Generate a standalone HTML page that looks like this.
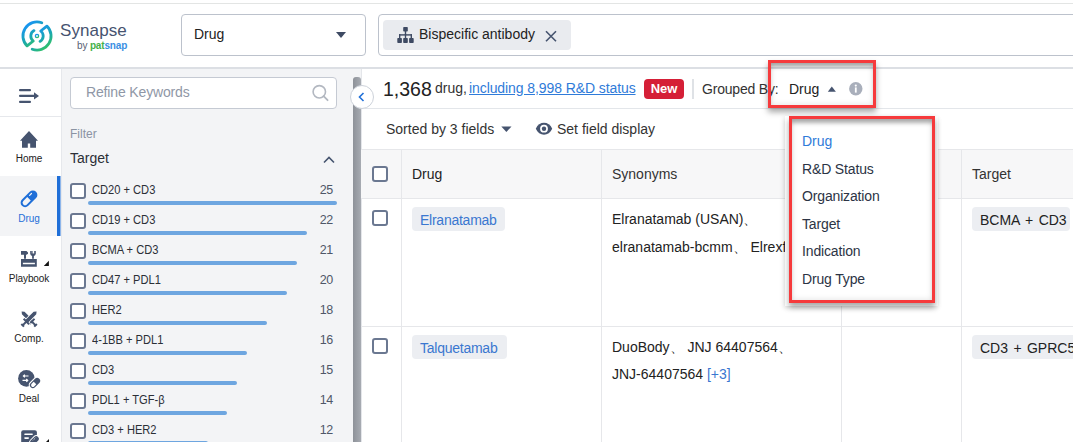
<!DOCTYPE html>
<html><head><meta charset="utf-8">
<style>
*{box-sizing:border-box;margin:0;padding:0}
html,body{width:1073px;height:442px;overflow:hidden;background:#fff;font-family:"Liberation Sans",sans-serif;color:#222}
.a{position:absolute;white-space:nowrap}
#topline{left:0;top:3px;width:1073px;height:1px;background:#e3e5e4}
#hdrline{left:0;top:67px;width:1073px;height:2px;background:#dcdfe4}
#sel{left:181px;top:14px;width:185px;height:42px;border:1px solid #bcc2cc;border-radius:4px}
#srch{left:378px;top:14px;width:720px;height:42px;border:1px solid #bcc2cc;border-radius:4px}
#nav{left:0;top:69px;width:62px;height:373px;background:#fff;border-right:1px solid #e6e8ec}
#panel{left:62px;top:69px;width:300px;height:373px;background:#f3f4f6;border-right:1px solid #e4e6ea}
#scroll{left:353px;top:77px;width:8px;height:365px;background:linear-gradient(90deg,#8e9299,#a7abb2);border-radius:3px 3px 0 0}
#main{left:362px;top:69px;width:711px;height:373px;background:#fff}
.cb{position:absolute;width:16px;height:16px;border:2px solid #6b7891;border-radius:3px;background:#fff}
.bar{position:absolute;height:4px;background:#6ea6e0;border-radius:2px}
.fl{position:absolute;font-size:13px;transform:scaleX(0.855);transform-origin:0 0;color:#2b2f36}
.fn{position:absolute;font-size:12.5px;letter-spacing:-0.3px;color:#4f5768;text-align:right;margin:-1px 0 0 -1px}
</style></head><body>
<div class="a" id="topline"></div>
<!-- logo -->
<svg class="a" style="left:19.5px;top:19px" width="34" height="34" viewBox="-17 -17 34 34">
<defs><linearGradient id="lg" x1="0.2" y1="0" x2="0.8" y2="1"><stop offset="0" stop-color="#1790ff"/><stop offset="0.55" stop-color="#1aa8b0"/><stop offset="1" stop-color="#36c65a"/></linearGradient></defs>
<g fill="none" stroke="url(#lg)" stroke-width="2.8" stroke-linecap="round" stroke-linejoin="round">
<path d="M4.8,-13.2 A14,14 0 0 0 -9.9,9.9 L-3.7,5 A6.2,6.2 0 0 1 -3,-5.4"/>
<path d="M-4.8,13.2 A14,14 0 0 0 9.9,-9.9 L3.7,-5 A6.2,6.2 0 0 1 3,5.4"/>
<circle cx="0" cy="0" r="1.6" stroke-width="1.4"/>
</g></svg>
<div class="a" style="left:60px;top:21px;font-size:17px;color:#46536f;letter-spacing:0.1px">Synapse</div>
<div class="a" style="left:77px;top:40px;font-size:10px;letter-spacing:-0.15px;color:#5a6172">by <span style="color:#44b04a;font-weight:bold">pat</span><span style="color:#3b8fe3;font-weight:bold">snap</span></div>
<!-- selects -->
<div class="a" id="sel"></div>
<div class="a" style="left:194px;top:26px;font-size:14px;color:#222">Drug</div>
<svg class="a" style="left:336px;top:32px" width="10" height="6"><path d="M0,0H10L5,6Z" fill="#3e4a63"/></svg>
<div class="a" id="srch"></div>
<div class="a" style="left:383px;top:20px;width:188px;height:30px;background:#e9ebef;border-radius:4px"></div>
<svg class="a" style="left:397px;top:27px" width="17" height="16" viewBox="0 0 17 16"><g fill="#3e4a63"><rect x="6.2" y="0" width="4.6" height="4.6" rx="0.8"/><rect x="7.8" y="4" width="1.4" height="4"/><rect x="2" y="7.2" width="13" height="1.4"/><rect x="2" y="7.2" width="1.4" height="4"/><rect x="13.6" y="7.2" width="1.4" height="4"/><rect x="7.8" y="7.2" width="1.4" height="4"/><rect x="0.3" y="11" width="4.6" height="5" rx="0.8"/><rect x="6.2" y="11" width="4.6" height="5" rx="0.8"/><rect x="12.1" y="11" width="4.6" height="5" rx="0.8"/></g></svg>
<div class="a" style="left:419px;top:26px;font-size:14px;color:#222">Bispecific antibody</div>
<svg class="a" style="left:545px;top:30px" width="12" height="12"><path d="M1,1.3L11,11.3M11,1.3L1,11.3" stroke="#46546f" stroke-width="1.6"/></svg>
<div class="a" id="hdrline"></div>

<!-- nav -->
<div class="a" id="nav"></div>
<div class="a" id="panel"></div>
<div class="a" id="scroll"></div>
<div class="a" id="main"></div>

<!-- panel -->
<div class="a" style="left:70px;top:77px;width:267px;height:32px;background:#fff;border:1px solid #c5cad3;border-radius:4px"></div>
<div class="a" style="left:86px;top:84px;font-size:14px;letter-spacing:-0.15px;color:#8f97a6">Refine Keywords</div>
<svg class="a" style="left:308px;top:82px" width="24" height="24" viewBox="308 82 24 24"><circle cx="319.3" cy="91.8" r="6.2" fill="none" stroke="#b3b8c1" stroke-width="1.6"/><path d="M323.6,96.2 L327.6,100.2" stroke="#b3b8c1" stroke-width="1.8" stroke-linecap="round"/></svg>
<div class="a" style="left:70px;top:127px;font-size:12px;color:#8a93a3">Filter</div>
<div class="a" style="left:70px;top:150px;font-size:14px;color:#2b2f36">Target</div>
<svg class="a" style="left:322px;top:155px" width="14" height="10"><path d="M2,7.5 L7,2.5 L12,7.5" fill="none" stroke="#46546f" stroke-width="1.6"/></svg>
<div class="cb" style="left:70px;top:183px"></div><div class="a fl" style="left:92px;top:182px">CD20 + CD3</div><div class="a fn" style="left:300px;width:34px;top:184px">25</div><div class="bar" style="left:88px;top:201px;width:249px"></div>
<div class="cb" style="left:70px;top:213px"></div><div class="a fl" style="left:92px;top:212px">CD19 + CD3</div><div class="a fn" style="left:300px;width:34px;top:214px">22</div><div class="bar" style="left:88px;top:231px;width:219px"></div>
<div class="cb" style="left:70px;top:243px"></div><div class="a fl" style="left:92px;top:242px">BCMA + CD3</div><div class="a fn" style="left:300px;width:34px;top:244px">21</div><div class="bar" style="left:88px;top:261px;width:209px"></div>
<div class="cb" style="left:70px;top:273px"></div><div class="a fl" style="left:92px;top:272px">CD47 + PDL1</div><div class="a fn" style="left:300px;width:34px;top:274px">20</div><div class="bar" style="left:88px;top:291px;width:199px"></div>
<div class="cb" style="left:70px;top:303px"></div><div class="a fl" style="left:92px;top:302px">HER2</div><div class="a fn" style="left:300px;width:34px;top:304px">18</div><div class="bar" style="left:88px;top:321px;width:179px"></div>
<div class="cb" style="left:70px;top:333px"></div><div class="a fl" style="left:92px;top:332px">4-1BB + PDL1</div><div class="a fn" style="left:300px;width:34px;top:334px">16</div><div class="bar" style="left:88px;top:351px;width:159px"></div>
<div class="cb" style="left:70px;top:363px"></div><div class="a fl" style="left:92px;top:362px">CD3</div><div class="a fn" style="left:300px;width:34px;top:364px">15</div><div class="bar" style="left:88px;top:381px;width:149px"></div>
<div class="cb" style="left:70px;top:393px"></div><div class="a fl" style="left:92px;top:392px">PDL1 + TGF-β</div><div class="a fn" style="left:300px;width:34px;top:394px">14</div><div class="bar" style="left:88px;top:411px;width:139px"></div>
<div class="cb" style="left:70px;top:423px"></div><div class="a fl" style="left:92px;top:422px">CD3 + HER2</div><div class="a fn" style="left:300px;width:34px;top:424px">12</div><div class="bar" style="left:88px;top:441px;width:120px"></div>

<!-- main -->
<div class="a" style="left:362px;top:108px;width:711px;height:1px;background:#e3e6ea"></div>
<div class="a" style="left:350px;top:85px;width:24px;height:24px;border-radius:50%;background:#fff;border:1px solid #cdd2da"></div>
<svg class="a" style="left:356px;top:91px" width="12" height="12"><path d="M7.5,2 L3.5,6 L7.5,10" fill="none" stroke="#1f6fd8" stroke-width="1.6"/></svg>
<div class="a" style="left:383px;top:78px;font-size:19.5px;color:#222">1,368</div>
<div class="a" style="left:435px;top:80px;font-size:14px;color:#333">drug,</div>
<div class="a" style="left:469px;top:80px;font-size:14px;letter-spacing:-0.09px;color:#2f7bd9;text-decoration:underline">including 8,998 R&amp;D status</div>
<div class="a" style="left:644px;top:79px;width:40px;height:20px;border-radius:4px;background:#d51f37;color:#fff;font-size:13px;font-weight:bold;text-align:center;line-height:20px">New</div>
<div class="a" style="left:692px;top:79px;width:2px;height:20px;background:#dfe2e6"></div>
<div class="a" style="left:702px;top:80.5px;font-size:14px;letter-spacing:-0.2px;color:#333">Grouped By:</div>
<div class="a" style="left:789px;top:81px;font-size:14px;color:#222">Drug</div>
<svg class="a" style="left:827px;top:86px" width="10" height="6"><path d="M0.8,5.7 L4.8,0.4 L8.9,5.7Z" fill="#46546f"/></svg>
<svg class="a" style="left:848px;top:81px" width="16" height="16"><circle cx="7.8" cy="7.7" r="6.7" fill="#a9afbb"/><circle cx="7.8" cy="4.6" r="1.1" fill="#fff"/><rect x="6.9" y="6.4" width="1.8" height="5.2" fill="#fff"/></svg>
<div class="a" style="left:386px;top:121px;font-size:14px;color:#333">Sorted by 3 fields</div>
<svg class="a" style="left:501px;top:126px" width="11" height="7"><path d="M0.3,0.5 H10.5 L5.4,6Z" fill="#46546f"/></svg>
<svg class="a" style="left:535px;top:122px" width="18" height="13"><path d="M0.8,6.7 C4,-1.2 14,-1.2 17.2,6.7 C14,14.6 4,14.6 0.8,6.7Z" fill="#46546f"/><circle cx="9" cy="6.7" r="3.9" fill="#fff"/><circle cx="9" cy="6.7" r="2.2" fill="#46546f"/></svg>
<div class="a" style="left:557px;top:121px;font-size:14px;color:#333">Set field display</div>
<!-- table -->
<div class="a" style="left:361px;top:149px;width:712px;height:50px;background:#f7f7f8;border-top:1px solid #e6e7ea;border-bottom:1px solid #e6e7ea"></div>
<div class="a" style="left:401px;top:149px;width:1px;height:293px;background:#e6e7ea"></div>
<div class="a" style="left:601px;top:149px;width:1px;height:293px;background:#e6e7ea"></div>
<div class="a" style="left:841px;top:149px;width:1px;height:293px;background:#e6e7ea"></div>
<div class="a" style="left:961px;top:149px;width:1px;height:293px;background:#e6e7ea"></div>
<div class="a" style="left:361px;top:326px;width:712px;height:1px;background:#e6e7ea"></div>
<div class="cb" style="left:372px;top:166px"></div>
<div class="a" style="left:412px;top:166px;font-size:14px;color:#222">Drug</div>
<div class="a" style="left:612px;top:166px;font-size:14px;color:#333">Synonyms</div>
<div class="a" style="left:972px;top:166px;font-size:14px;color:#333">Target</div>
<div class="cb" style="left:372px;top:210px"></div>
<div class="a" style="left:412px;top:207px;width:93px;height:24px;background:#eceef2;border-radius:4px"></div>
<div class="a" style="left:420px;top:212px;font-size:14px;letter-spacing:-0.25px;color:#3a77d0">Elranatamab</div>
<div class="a" style="left:612px;top:211px;font-size:14px;color:#222">Elranatamab (USAN)、</div>
<div class="a" style="left:612px;top:239px;font-size:14px;color:#222">elranatamab-bcmm、 Elrexfio</div>
<div class="a" style="left:972px;top:207px;width:98px;height:24px;background:#eceef2;border-radius:4px"></div>
<div class="a" style="left:980px;top:212px;font-size:14px;word-spacing:1.5px;color:#222">BCMA + CD3</div>
<div class="cb" style="left:372px;top:338px"></div>
<div class="a" style="left:412px;top:335px;width:95px;height:24px;background:#eceef2;border-radius:4px"></div>
<div class="a" style="left:420px;top:340px;font-size:14px;letter-spacing:-0.25px;color:#3a77d0">Talquetamab</div>
<div class="a" style="left:612px;top:339px;font-size:14px;color:#222">DuoBody、 JNJ 64407564、</div>
<div class="a" style="left:612px;top:366px;font-size:14px;color:#222">JNJ-64407564 <span style="color:#3a77d0">[+3]</span></div>
<div class="a" style="left:972px;top:335px;width:110px;height:24px;background:#eceef2;border-radius:4px"></div>
<div class="a" style="left:980px;top:340px;font-size:14px;word-spacing:1.5px;color:#222">CD3 + GPRC5D</div>
<!-- overlays -->
<div class="a" style="left:768px;top:60px;width:108px;height:48px;border:3px solid #f63a3c;box-shadow:0 4px 6px rgba(0,0,0,0.35),inset 0 6px 4px -2px rgba(0,0,0,0.3),inset 0 0 6px rgba(0,0,0,0.12)"></div>
<div class="a" style="left:785px;top:116px;width:153px;height:190px;background:#fff;box-shadow:-1px 2px 5px rgba(0,0,0,0.14)"></div><div class="a" style="left:789px;top:116px;width:146px;height:187px;background:#fff;border:3px solid #f63a3c;box-shadow:0 4px 6px rgba(0,0,0,0.35),inset 0 6px 4px -2px rgba(0,0,0,0.3),inset 0 0 6px rgba(0,0,0,0.12)"></div>
<div class="a" style="left:802px;top:133px;font-size:14px;color:#2f7bd9">Drug</div>
<div class="a" style="left:802px;top:161px;font-size:14px;letter-spacing:-0.15px;color:#2c3445">R&amp;D Status</div>
<div class="a" style="left:802px;top:188px;font-size:14px;letter-spacing:-0.15px;color:#2c3445">Organization</div>
<div class="a" style="left:802px;top:216px;font-size:14px;letter-spacing:-0.15px;color:#2c3445">Target</div>
<div class="a" style="left:802px;top:243px;font-size:14px;letter-spacing:-0.15px;color:#2c3445">Indication</div>
<div class="a" style="left:802px;top:271px;font-size:14px;letter-spacing:-0.15px;color:#2c3445">Drug Type</div>
<!-- nav icons -->
<svg class="a" style="left:0;top:68px" width="61" height="374" viewBox="0 68 61 374">
<g fill="#46546f">
<rect x="19" y="89" width="12" height="2.2" rx="1"/>
<rect x="19" y="94.8" width="16" height="2.2" rx="1"/>
<path d="M34,92.3 L39,95.9 L34,99.6Z"/>
<rect x="19" y="100.7" width="12" height="2.2" rx="1"/>
<path d="M29,131 L38,140.7 L36,140.7 L36,147.8 L30.2,147.8 L30.2,143.6 L27.8,143.6 L27.8,147.8 L22,147.8 L22,140.7 L20,140.7Z"/>
</g>
<rect x="0" y="116" width="61" height="1" fill="#e6e8ec"/>
<rect x="0" y="176" width="60" height="60" fill="#f3f4f6"/>
<rect x="57" y="176" width="3.5" height="60" fill="#1f6fd8"/>
<g transform="translate(29 198.8) rotate(-45)">
<rect x="-10" y="-4.5" width="20" height="9" rx="4.5" fill="#1f6fd8"/>
<path d="M0,-2.5 L-5.5,-2.5 A2.5,2.5 0 0 0 -5.5,2.5 L0,2.5Z" fill="#f3f4f6"/>
<rect x="2.3" y="-2.6" width="3.8" height="1.2" rx="0.6" fill="#f3f4f6"/>
</g>
<g fill="#46546f">
<path d="M21,251 h5.5 l1.5,1.6 v1.2 l-1.5,1.0 h-0.5 v3.9 h-2 v-3.9 h-3z"/>
<path d="M30.2,251 h1.6 v2.6 h0.8 v-2.6 h1.6 M30.2,251 v2.8 a2.8,2.8 0 0 0 1.9,2.3 v2.6 h1.8 v-2.6 a2.8,2.8 0 0 0 1.9,-2.3 v-2.8 h-1.6 v2.4 h-2.6 v-2.4z"/>
<path d="M21,258.9 h15.8 v7.8 h-15.8z M22.9,262.7 v1.5 h12 v-1.5z" fill-rule="evenodd"/>
</g>
<path d="M43.8,265.9 L48.9,260.8 L48.9,265.9Z" fill="#111"/>
<defs><path id="sw" d="M0,-11.5 L2,-9 L2,3 L4.2,3 L4.2,5.2 L1.1,5.2 L1.1,8.8 L2,8.8 L2,11 L-2,11 L-2,8.8 L-1.1,8.8 L-1.1,5.2 L-4.2,5.2 L-4.2,3 L-2,3 L-2,-9 Z"/></defs>
<g transform="translate(29.1 318.9) scale(0.92)">
<use href="#sw" transform="rotate(-45)" fill="#46546f"/>
<use href="#sw" transform="rotate(45)" fill="#46546f" stroke="#fff" stroke-width="1.6"/>
<use href="#sw" transform="rotate(45)" fill="#46546f"/>
</g>
<circle cx="26.4" cy="378.4" r="8.3" fill="#46546f"/>
<g stroke="#fff" stroke-width="1.2" fill="none"><path d="M28.5,376 h-5 M24.8,374.6 l-1.4,1.4 l1.4,1.4 M22.5,380.4 h5 M26.3,379 l1.4,1.4 l-1.4,1.4"/></g>
<g transform="translate(35 383) rotate(-45)">
<rect x="-7.2" y="-4.2" width="14.4" height="8.4" rx="4.2" fill="#fff"/>
<rect x="-6" y="-3" width="12" height="6" rx="3" fill="#46546f"/>
<path d="M0,-1.8 L-3,-1.8 A1.8,1.8 0 0 0 -3,1.8 L0,1.8Z" fill="#fff"/>
</g>
<rect x="21.2" y="430.2" width="15.7" height="14" rx="2" fill="#46546f"/>
<rect x="24.2" y="433.4" width="8.7" height="1.6" rx="0.8" fill="#fff"/>
<rect x="24.2" y="437.3" width="4.8" height="1.6" rx="0.8" fill="#fff"/>
<g transform="translate(34.5 440.5) rotate(-45)"><rect x="-6" y="-3.6" width="12" height="7.2" rx="3.6" fill="#fff"/><rect x="-5" y="-2.6" width="10" height="5.2" rx="2.6" fill="#46546f"/><path d="M-1,-1.2 L3,-1.2" stroke="#fff" stroke-width="0.8" stroke-dasharray="1 0.8"/></g>
<path d="M46,442 L49,439 L49,442Z" fill="#111"/>
</svg>
<div class="a" style="left:0;top:153px;width:58px;text-align:center;font-size:10px;color:#222">Home</div>
<div class="a" style="left:0;top:213px;width:58px;text-align:center;font-size:10px;color:#1f6fd8">Drug</div>
<div class="a" style="left:0;top:273px;width:58px;text-align:center;font-size:10px;letter-spacing:-0.1px;color:#222">Playbook</div>
<div class="a" style="left:0;top:333px;width:58px;text-align:center;font-size:10px;color:#222">Comp.</div>
<div class="a" style="left:0;top:393px;width:58px;text-align:center;font-size:10px;color:#222">Deal</div>

</body></html>
